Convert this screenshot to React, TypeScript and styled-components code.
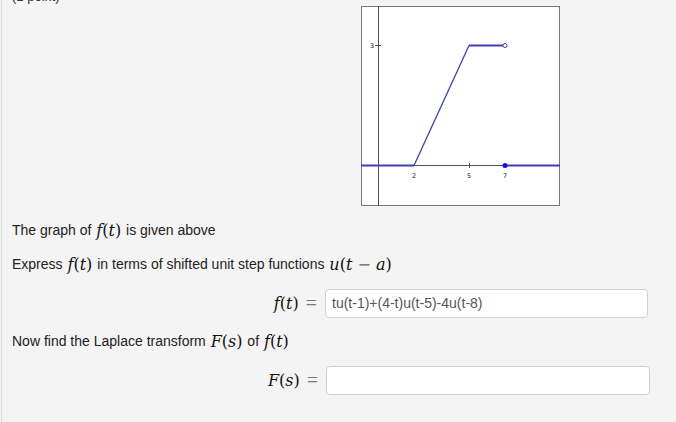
import styled, { createGlobalStyle } from 'styled-components'

const GlobalStyle = createGlobalStyle`
  html, body { margin: 0; padding: 0; background: #f4f4f4; overflow: hidden; }
  body { font-family: "Liberation Sans", Arial, sans-serif; font-size: 14px; color: #222; }
`;

const Panel = styled.div`
  height: 422px;
  margin-left: 1px;
  border-left: 1px solid #dcdcdc;
  background: #f4f4f4;
  padding: 0 0 0 10px;
  box-sizing: border-box;
  overflow: hidden;
`;

const Points = styled.div`
  margin-top: -11px;
  height: 17px;
  font-size: 13px;
  color: #333;
`;

const GraphWrap = styled.div`
  margin: 0 0 0 349px;
  width: 199px;
  height: 200px;
`;

const Para = styled.p<{ h: number }>`
  margin: 0;
  height: ${(p) => p.h}px;
  display: flex;
  align-items: center;
  white-space: pre;
`;

const M = styled.span`
  font-family: "DejaVu Serif", "Liberation Serif", serif;
  font-style: italic;
  font-size: 16px;
  margin: 0 1px;
  color: #111;
`;

const Up = styled.span`
  font-style: normal;
`;

const Op = styled.span`
  font-style: normal;
  color: #666;
`;

const AnswerRow = styled.div<{ h: number }>`
  display: flex;
  align-items: center;
  height: ${(p) => p.h}px;
`;

const Label = styled.div<{ w: number }>`
  width: ${(p) => p.w}px;
  display: flex;
  justify-content: flex-end;
  align-items: center;
  padding-right: 8px;
  box-sizing: border-box;
`;

const Eq = styled.span`
  font-family: "Liberation Serif", "Times New Roman", serif;
  color: #777;
  margin-left: 6px;
  font-size: 20px;
`;

const Field = styled.div<{ w: number }>`
  width: ${(p) => p.w}px;
  height: 29px;
  box-sizing: border-box;
  background: #fff;
  border: 1px solid #cfcfcf;
  border-radius: 4px;
  padding: 0 6px;
  display: flex;
  align-items: center;
  font-size: 14px;
  color: #555;
`;

function Graph() {
  const blue = '#4040b0';
  return (
    <svg width="199" height="200" viewBox="0 0 199 200">
      <rect x="0.5" y="0.5" width="198" height="199" fill="#fff" stroke="#777" />
      <line x1="17.5" y1="0" x2="17.5" y2="200" stroke="#555" />
      <line x1="0" y1="159.5" x2="199" y2="159.5" stroke="#555" />
      <line x1="108.5" y1="157" x2="108.5" y2="162" stroke="#555" />
      <line x1="14" y1="39.5" x2="20" y2="39.5" stroke="#555" />
      <g fontFamily="'DejaVu Sans', sans-serif" fontSize="6.5" fill="#222">
        <text x="9" y="42">3</text>
        <text x="51" y="172">2</text>
        <text x="106" y="172">5</text>
        <text x="142" y="172">7</text>
      </g>
      <g stroke={blue} fill="none">
        <line x1="0" y1="159.5" x2="53" y2="159.5" strokeWidth="2" />
        <line x1="53" y1="159.5" x2="108" y2="39.5" strokeWidth="1.3" />
        <line x1="108" y1="39.5" x2="142" y2="39.5" strokeWidth="2" />
        <line x1="144" y1="159.5" x2="199" y2="159.5" strokeWidth="2" />
        <circle cx="144" cy="39.5" r="2" fill="#fff" strokeWidth="1" />
      </g>
      <circle cx="144" cy="159.5" r="2.5" fill="#1010e0" />
    </svg>
  );
}

export default function App() {
  return (
    <>
      <GlobalStyle />
      <Panel>
        <Points>(1 point)</Points>
        <GraphWrap>
          <Graph />
        </GraphWrap>
        <Para h={48}>
          The graph of <M>f<Up>(</Up>t<Up>)</Up></M> is given above
        </Para>
        <Para h={20}>
          Express <M>f<Up>(</Up>t<Up>)</Up></M> in terms of shifted unit step functions <M>u<Up>(</Up>t <Op>−</Op> a<Up>)</Up></M>
        </Para>
        <AnswerRow h={58}>
          <Label w={313}>
            <M>f<Up>(</Up>t<Up>)</Up></M>
            <Eq>=</Eq>
          </Label>
          <Field w={323}>tu(t-1)+(4-t)u(t-5)-4u(t-8)</Field>
        </AnswerRow>
        <Para h={18}>
          Now find the Laplace transform <M>F<Up>(</Up>s<Up>)</Up></M> of <M>f<Up>(</Up>t<Up>)</Up></M>
        </Para>
        <AnswerRow h={61}>
          <Label w={314}>
            <M>F<Up>(</Up>s<Up>)</Up></M>
            <Eq>=</Eq>
          </Label>
          <Field w={324} />
        </AnswerRow>
      </Panel>
    </>
  );
}
